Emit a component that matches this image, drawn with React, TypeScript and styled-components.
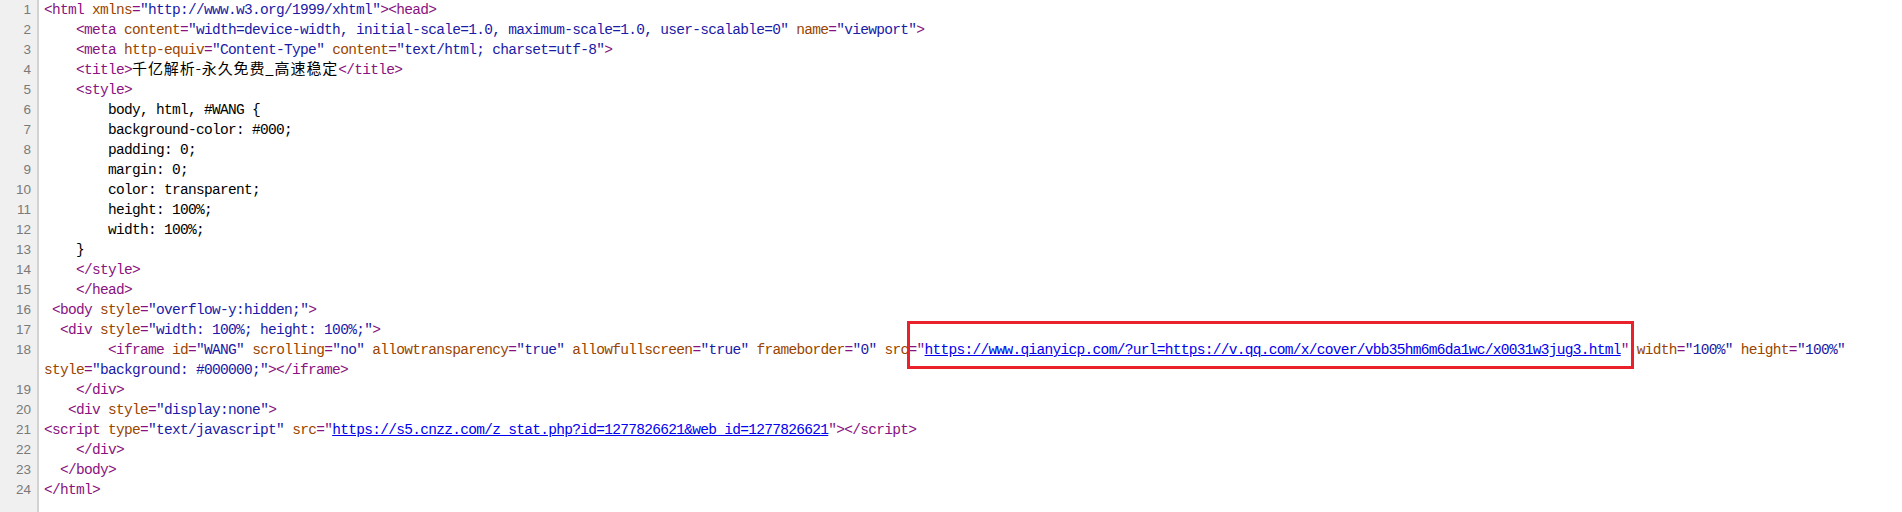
import React, { FC, ReactNode } from "react";
import styled, { createGlobalStyle } from "styled-components";

const GlobalStyle = createGlobalStyle`
  html, body {
    margin: 0;
    padding: 0;
    background: #fff;
  }
`;

const Page = styled.div`
  display: grid;
  grid-template-columns: 39px 1fr;
  align-content: start;
  min-height: 100vh;
  background: linear-gradient(
    to right,
    #f0f0f0 0 37px,
    #d2d2d2 37px 39px,
    #fff 39px
  );
`;

const LineNo = styled.div`
  box-sizing: border-box;
  width: 37px;
  padding-right: 6px;
  text-align: right;
  font-family: "Liberation Sans", Arial, sans-serif;
  font-size: 13.5px;
  line-height: 20px;
  color: #7a7a7a;
`;

const Code = styled.div`
  padding-left: 5px;
  font-family: "Liberation Mono", "Noto Sans CJK SC", monospace;
  font-size: 14.5px;
  letter-spacing: -0.7px;
  line-height: 20px;
  height: auto;
  color: #000;
  white-space: pre-wrap;
`;

const Tag = styled.span`
  color: #881280;
`;

const Attr = styled.span`
  color: #994500;
`;

const Val = styled.span`
  color: #1a1aa6;
`;

const Link = styled.a`
  color: #0000ee;
  text-decoration: underline;
`;

const Cjk = styled.span`
  font-family: "Noto Sans CJK SC", sans-serif;
  font-size: 15px;
  letter-spacing: 0.9px;
  line-height: 1;
`;

const Marked = styled.span`
  position: relative;
  display: inline-block;
  vertical-align: top;
  line-height: 20px;

  &::after {
    content: "";
    position: absolute;
    top: -19px;
    bottom: -9px;
    left: -10px;
    right: -5px;
    border: 3px solid #e8212b;
  }
`;

// one attribute: name="value"
const A: FC<{ n: string; v: string }> = ({ n, v }) => (
  <>
    {" "}
    <Attr>{n}</Attr>=<Val>"{v}"</Val>
  </>
);

const Line: FC<{ no: number; children?: ReactNode }> = ({ no, children }) => (
  <>
    <LineNo>{no}</LineNo>
    <Code>{children}</Code>
  </>
);

const iframeSrc =
  "https://www.qianyicp.com/?url=https://v.qq.com/x/cover/vbb35hm6m6da1wc/x0031w3jug3.html";
const scriptSrc =
  "https://s5.cnzz.com/z_stat.php?id=1277826621&web_id=1277826621";

export default function App() {
  return (
    <>
      <GlobalStyle />
      <Page>
        <Line no={1}>
          <Tag>
            {"<html"}
            <A n="xmlns" v="http://www.w3.org/1999/xhtml" />
            {"><head>"}
          </Tag>
        </Line>
        <Line no={2}>
          {"    "}
          <Tag>
            {"<meta"}
            <A
              n="content"
              v="width=device-width, initial-scale=1.0, maximum-scale=1.0, user-scalable=0"
            />
            <A n="name" v="viewport" />
            {">"}
          </Tag>
        </Line>
        <Line no={3}>
          {"    "}
          <Tag>
            {"<meta"}
            <A n="http-equiv" v="Content-Type" />
            <A n="content" v="text/html; charset=utf-8" />
            {">"}
          </Tag>
        </Line>
        <Line no={4}>
          {"    "}
          <Tag>{"<title>"}</Tag>
          <Cjk>千亿解析-永久免费_高速稳定</Cjk>
          <Tag>{"</title>"}</Tag>
        </Line>
        <Line no={5}>
          {"    "}
          <Tag>{"<style>"}</Tag>
        </Line>
        <Line no={6}>{"        body, html, #WANG {"}</Line>
        <Line no={7}>{"        background-color: #000;"}</Line>
        <Line no={8}>{"        padding: 0;"}</Line>
        <Line no={9}>{"        margin: 0;"}</Line>
        <Line no={10}>{"        color: transparent;"}</Line>
        <Line no={11}>{"        height: 100%;"}</Line>
        <Line no={12}>{"        width: 100%;"}</Line>
        <Line no={13}>{"    }"}</Line>
        <Line no={14}>
          {"    "}
          <Tag>{"</style>"}</Tag>
        </Line>
        <Line no={15}>
          {"    "}
          <Tag>{"</head>"}</Tag>
        </Line>
        <Line no={16}>
          {" "}
          <Tag>
            {"<body"}
            <A n="style" v="overflow-y:hidden;" />
            {">"}
          </Tag>
        </Line>
        <Line no={17}>
          {"  "}
          <Tag>
            {"<div"}
            <A n="style" v="width: 100%; height: 100%;" />
            {">"}
          </Tag>
        </Line>
        <Line no={18}>
          {"        "}
          <Tag>
            {"<iframe"}
            <A n="id" v="WANG" />
            <A n="scrolling" v="no" />
            <A n="allowtransparency" v="true" />
            <A n="allowfullscreen" v="true" />
            <A n="frameborder" v="0" />{" "}
            <Attr>src</Attr>=
            <Marked>
              "<Link href="#">{iframeSrc}</Link>"
            </Marked>
            <A n="width" v="100%" />
            <A n="height" v="100%" />
            <A n="style" v="background: #000000;" />
            {"></iframe>"}
          </Tag>
        </Line>
        <Line no={19}>
          {"    "}
          <Tag>{"</div>"}</Tag>
        </Line>
        <Line no={20}>
          {"   "}
          <Tag>
            {"<div"}
            <A n="style" v="display:none" />
            {">"}
          </Tag>
        </Line>
        <Line no={21}>
          <Tag>
            {"<script"}
            <A n="type" v="text/javascript" />{" "}
            <Attr>src</Attr>="<Link href="#">{scriptSrc}</Link>"
            {"></script>"}
          </Tag>
        </Line>
        <Line no={22}>
          {"    "}
          <Tag>{"</div>"}</Tag>
        </Line>
        <Line no={23}>
          {"  "}
          <Tag>{"</body>"}</Tag>
        </Line>
        <Line no={24}>
          <Tag>{"</html>"}</Tag>
        </Line>
      </Page>
    </>
  );
}
